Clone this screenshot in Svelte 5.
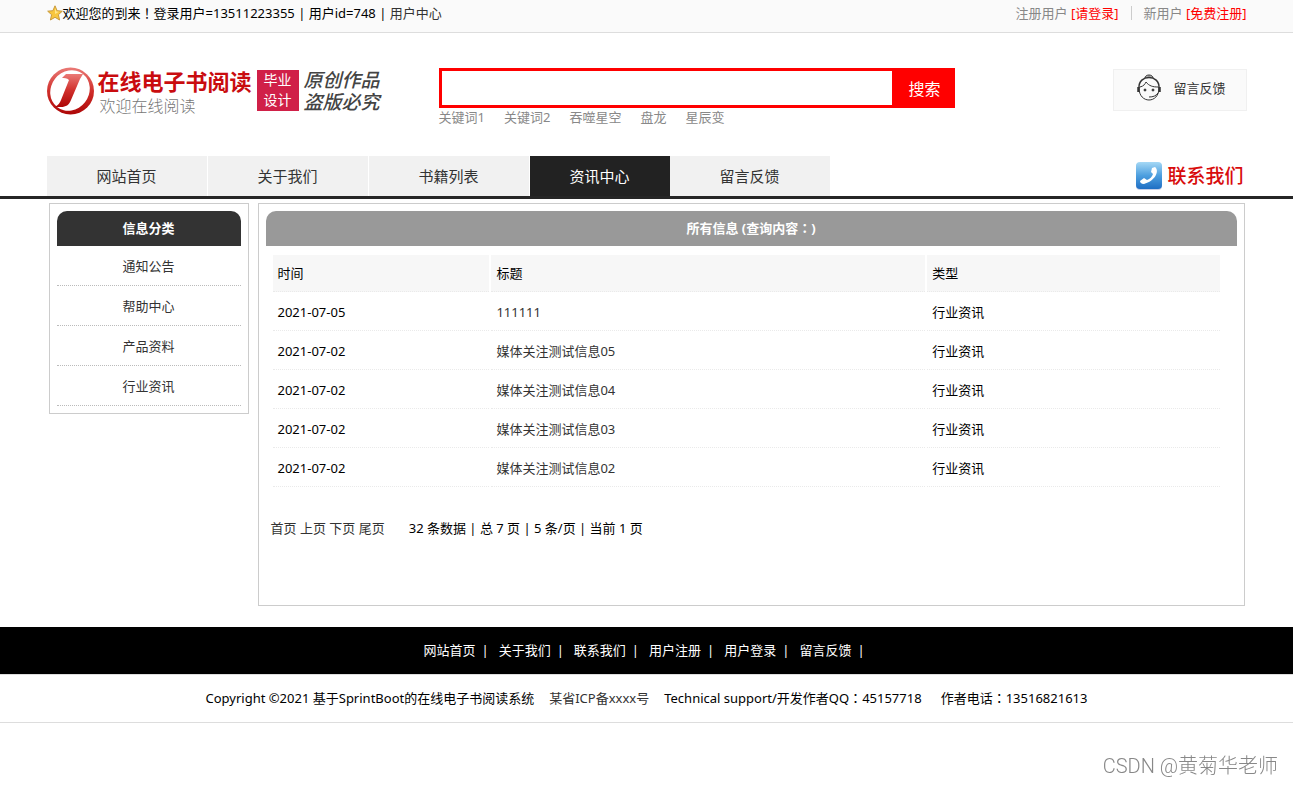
<script lang="ts">
	let keyword = $state("");

	const hotWords = ["关键词1", "关键词2", "吞噬星空", "盘龙", "星辰变"];

	const navItems = [
		{ label: "网站首页", href: "#index" },
		{ label: "关于我们", href: "#about" },
		{ label: "书籍列表", href: "#books" },
		{ label: "资讯中心", href: "#news", active: true },
		{ label: "留言反馈", href: "#feedback" },
	];

	const categories = ["通知公告", "帮助中心", "产品资料", "行业资讯"];

	const rows = [
		{ date: "2021-07-05", title: "111111", type: "行业资讯" },
		{ date: "2021-07-02", title: "媒体关注测试信息05", type: "行业资讯" },
		{ date: "2021-07-02", title: "媒体关注测试信息04", type: "行业资讯" },
		{ date: "2021-07-02", title: "媒体关注测试信息03", type: "行业资讯" },
		{ date: "2021-07-02", title: "媒体关注测试信息02", type: "行业资讯" },
	];

	const pages = ["首页", "上页", "下页", "尾页"];

	const footLinks = ["网站首页", "关于我们", "联系我们", "用户注册", "用户登录", "留言反馈"];
</script>

<div class="topbar">
	<div class="wrap topbar-inner">
		<div class="welcome">
			<svg width="16" height="16" viewBox="0 0 16 16" aria-hidden="true">
				<path d="M8 .8l2.1 4.9 5.2.5-3.9 3.5 1.2 5.3L8 12.3l-4.6 2.7 1.2-5.3L.7 6.2l5.2-.5z" fill="#f8c63d" stroke="#c99a3c" />
				<path d="M8 3l1.3 3.4 2.8.3L8 9z" fill="#ffe58a" />
			</svg>
			<span>欢迎您的到来<span class="mid">！</span>登录用户=13511223355 | 用户id=748 | <a href="#user">用户中心</a></span>
		</div>
		<div class="account">
			<span>注册用户 <a href="#login">[请登录]</a></span>
			<span class="divider"></span>
			<span>新用户 <a href="#register">[免费注册]</a></span>
		</div>
	</div>
</div>

<header class="wrap header">
	<a class="logo" href="#index">
		<svg width="48" height="48" viewBox="0 0 48 48" aria-hidden="true">
			<defs>
				<linearGradient id="ring" x1="0" y1="0" x2="0" y2="1">
					<stop offset="0" stop-color="#ea7a76" />
					<stop offset="0.5" stop-color="#d02f2b" />
					<stop offset="1" stop-color="#ad0606" />
				</linearGradient>
			</defs>
			<circle cx="23.500" cy="24" r="23.500" fill="url(#ring)" />
			<ellipse cx="23" cy="23.500" rx="19" ry="21" transform="rotate(38 23 23.500)" fill="#fff" />
			<path d="M15 11l4-4h17l-3 5-9 21c-2 5-5 7-10 7H8c3-2 5-4 6-7l8-20c-2-2-5-2-7-2z" fill="url(#ring)" />
		</svg>
		<span class="names">
			<strong>在线电子书阅读</strong>
			<small>欢迎在线阅读</small>
		</span>
		<span class="stamp">毕业<br />设计</span>
		<span class="brush">原创作品<br />盗版必究</span>
	</a>

	<div class="search">
		<form onsubmit={(e) => e.preventDefault()}>
			<input type="text" aria-label="搜索" bind:value={keyword} />
			<button type="submit">搜索</button>
		</form>
		<div class="hot">
			{#each hotWords as word}
				<a href="#search">{word}</a>
			{/each}
		</div>
	</div>

	<a class="feedback" href="#feedback">
		<svg width="24" height="28" viewBox="0 0 24 28" fill="none" stroke="#333" aria-hidden="true">
			<path d="M8 4c0-4 8-4 8 0" fill="#aaa" />
			<path d="M2 14C1 0 23 0 22 14" stroke-width="1.5" />
			<path d="M2 14c0 16 20 16 20 0" />
			<path d="M3 13c4-1 5-3 6-5 3 4 7 5 12 5" />
			<path d="M1.500 13v5M22.500 13v5" stroke-width="2.500" />
			<path d="M21 19c-2 3-5 4-9 4" />
			<circle cx="8" cy="16" r="1" fill="#333" />
			<circle cx="16" cy="16" r="1" fill="#333" />
		</svg>
		<span>留言反馈</span>
	</a>
</header>

<div class="navbar">
	<div class="wrap navbar-inner">
		<nav>
			{#each navItems as item}
				<a href={item.href} class:active={item.active}>{item.label}</a>
			{/each}
		</nav>
		<a class="contact" href="#contact">
			<svg width="28" height="30" viewBox="0 0 28 30" aria-hidden="true">
				<defs>
					<linearGradient id="phone" x1="0" y1="0" x2="0" y2="1">
						<stop offset="0" stop-color="#a5d8f5" />
						<stop offset="0.5" stop-color="#4d9fdf" />
						<stop offset="1" stop-color="#1f6fc4" />
					</linearGradient>
				</defs>
				<rect x="1" y="2" width="26" height="27" rx="4" fill="#c6cfe8" />
				<rect x="1" y="1" width="26" height="27" rx="4" fill="url(#phone)" />
				<path d="M17 7l3-1c5 4 0 14-11 17-3 0-4-2-4-3l4-3 3 2c3-1 5-3 6-6l-2-2z" fill="#fff" />
			</svg>
			<span>联系我们</span>
		</a>
	</div>
</div>

<div class="wrap content">
	<aside class="panel side">
		<h2>信息分类</h2>
		<ul>
			{#each categories as name}
				<li><a href="#category">{name}</a></li>
			{/each}
		</ul>
	</aside>

	<main class="panel main">
		<h2>所有信息 (查询内容<span class="mid">：</span>)</h2>
		<div class="list">
			<table>
				<thead>
					<tr>
						<th class="col-date">时间</th>
						<th class="col-title">标题</th>
						<th>类型</th>
					</tr>
				</thead>
				<tbody>
					{#each rows as row}
						<tr>
							<td>{row.date}</td>
							<td><a href="#detail">{row.title}</a></td>
							<td>{row.type}</td>
						</tr>
					{/each}
				</tbody>
			</table>
			<div class="pager">
				<span>
					{#each pages as page}
						<a href="#page">{page}</a>{" "}
					{/each}
				</span>
				<span>32 条数据 | 总 7 页 | 5 条/页 | 当前 1 页</span>
			</div>
		</div>
	</main>
</div>

<footer>
	<div class="foot-links">
		{#each footLinks as link}
			<span><a href="#foot">{link}</a>|</span>
		{/each}
	</div>
	<div class="copyright">
		<span>Copyright ©2021 基于SprintBoot的在线电子书阅读系统</span>
		<a href="#icp">某省ICP备xxxx号</a>
		<span>Technical support/开发作者QQ<span class="mid">：</span>45157718</span>
		<span class="tel">作者电话<span class="mid">：</span>13516821613</span>
	</div>
</footer>

<div class="watermark">CSDN @黄菊华老师</div>

<style>
	:global(body) {
		margin: 0;
		background: #fff;
		color: #000;
		font: 13px/20px "Noto Sans", "Noto Sans CJK SC", sans-serif;
	}

	a {
		color: #333;
		text-decoration: none;
	}

	svg {
		display: block;
		flex: none;
	}

	.wrap {
		max-width: 1200px;
		margin: 0 auto;
	}

	/* full-width punctuation centred in its box */
	.mid {
		font-family: "Noto Sans CJK TC", sans-serif;
		line-height: 1;
	}

	.topbar {
		background: #fafafa;
		border-bottom: 1px solid #ddd;
	}

	.topbar-inner {
		display: flex;
		justify-content: space-between;
		padding: 3px 0 9px;
	}

	.welcome,
	.account {
		display: flex;
		align-items: center;
	}

	.account {
		gap: 12px;
		color: #888;
	}

	.account a {
		color: #f00;
	}

	.divider {
		width: 1px;
		height: 14px;
		background: #ccc;
	}

	.header {
		display: flex;
		align-items: flex-start;
		padding: 34px 0 30px;
	}

	.logo {
		display: flex;
		align-items: flex-start;
		width: 392px;
	}

	.names {
		display: flex;
		flex-direction: column;
		margin-left: 3px;
	}

	.names strong {
		font-size: 22px;
		line-height: 28px;
		font-weight: 700;
		color: #c90c0f;
	}

	.names small {
		padding-left: 2px;
		font-size: 16px;
		line-height: 22px;
		font-weight: 300;
		color: #777;
	}

	.stamp {
		box-sizing: border-box;
		width: 42px;
		height: 41px;
		margin: 3px 5px 0;
		font-size: 14px;
		line-height: 20px;
		text-align: center;
		background: #d02048;
		color: #fff;
	}

	.brush {
		margin-top: 2px;
		font-size: 19px;
		line-height: 22px;
		font-style: italic;
		font-weight: 500;
		color: #444;
	}

	.search {
		width: 516px;
		padding-top: 1px;
	}

	form {
		display: flex;
	}

	input {
		box-sizing: border-box;
		flex: 1;
		min-width: 0;
		height: 40px;
		padding: 0 8px;
		border: 3px solid #f00;
		outline: none;
		font: inherit;
	}

	button {
		width: 60px;
		height: 40px;
		padding: 2px 0 0;
		border: 0;
		background: #f00;
		color: #fff;
		font: inherit;
		font-size: 16px;
	}

	.hot {
		display: flex;
		gap: 19px;
		line-height: 18px;
	}

	.hot a {
		color: #888;
	}

	.feedback {
		box-sizing: border-box;
		display: flex;
		align-items: center;
		justify-content: center;
		gap: 12px;
		width: 134px;
		height: 42px;
		margin: 2px 0 0 auto;
		padding: 0 0 4px 4px;
		border: 1px solid #f0f0f0;
		background: #fafafa;
	}

	.navbar {
		border-bottom: 3px solid #262626;
	}

	.navbar-inner {
		display: flex;
		justify-content: space-between;
	}

	nav {
		display: flex;
	}

	nav a {
		width: 160px;
		border-right: 1px solid #fff;
		background: #f1f1f1;
		font-size: 15px;
		line-height: 40px;
		text-align: center;
	}

	nav a.active {
		width: 140px;
		border: 0;
		background: #222;
		color: #fff;
	}

	.contact {
		display: flex;
		align-items: center;
		gap: 4px;
		margin-right: 3px;
		color: #d80c0c;
		font-size: 19px;
		font-weight: 500;
	}

	.content {
		box-sizing: border-box;
		display: flex;
		align-items: flex-start;
		gap: 9px;
		padding: 4px 2px 0;
	}

	.panel {
		box-sizing: border-box;
		padding: 7px;
		border: 1px solid #ccc;
	}

	.panel h2 {
		margin: 0;
		border-radius: 10px 10px 0 0;
		color: #fff;
		font-size: 13px;
		line-height: 35px;
		text-align: center;
	}

	.side {
		flex: none;
		width: 200px;
	}

	.side h2 {
		background: #333;
	}

	ul {
		margin: 0;
		padding: 0;
		list-style: none;
	}

	li {
		border-bottom: 1px dotted #bbb;
		text-align: center;
	}

	li a {
		display: block;
		padding-top: 2px;
		line-height: 37px;
	}

	.main {
		flex: 1;
		min-height: 403px;
	}

	.main h2 {
		background: #999;
	}

	.list {
		padding: 7px 15px 0 5px;
	}

	table {
		width: 100%;
		table-layout: fixed;
		border-spacing: 2px;
	}

	.col-date {
		width: 23%;
	}

	.col-title {
		width: 46%;
	}

	th,
	td {
		box-sizing: border-box;
		height: 37px;
		padding: 0 5px;
		border-bottom: 1px dotted #eaeaea;
		font-weight: 400;
		text-align: left;
	}

	th {
		background: #f7f7f7;
	}

	.pager {
		display: flex;
		gap: 24px;
		padding-top: 29px;
	}

	footer {
		margin-top: 21px;
		text-align: center;
	}

	.foot-links {
		display: flex;
		justify-content: center;
		gap: 10px;
		padding-right: 5px;
		background: #000;
		color: #fff;
		line-height: 47px;
	}

	.foot-links a {
		margin-right: 6px;
		color: #fff;
	}

	.copyright {
		display: flex;
		justify-content: center;
		gap: 15px;
		border: 1px solid #ddd;
		border-width: 1px 0;
		line-height: 47px;
	}

	.tel {
		margin-left: 4px;
	}

	.watermark {
		position: fixed;
		right: 15px;
		bottom: 6px;
		font-family: Roboto, "Noto Sans CJK SC", sans-serif;
		font-size: 20px;
		line-height: 28px;
		font-weight: 300;
		color: #888;
	}
</style>
